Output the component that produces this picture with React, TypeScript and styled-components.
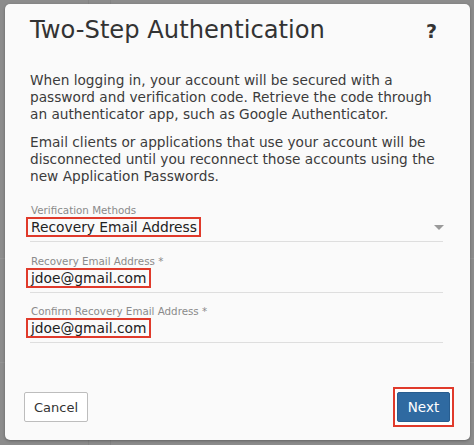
import React from "react";
import styled, { createGlobalStyle } from "styled-components";

const GlobalStyle = createGlobalStyle`
  html, body {
    margin: 0;
    padding: 0;
    background: #8c8c8c;
  }
  body {
    font-family: "DejaVu Sans", "Liberation Sans", sans-serif;
  }
`;

// the page behind the dialog shows through as a dimmed grid
const Backdrop = styled.div`
  width: 474px;
  height: 445px;
  box-sizing: border-box;
  padding: 4px 4px 5px 5px;
  background-color: #8c8c8c;
  background-image: linear-gradient(#848484, #848484),
    linear-gradient(#848484, #848484), linear-gradient(#939393, #939393),
    linear-gradient(#939393, #939393);
  background-size: 1px 100%, 1px 100%, 100% 1px, 100% 1px;
  background-position: 88px 0, 110px 0, 0 258px, 0 362px;
  background-repeat: no-repeat;
`;

const Modal = styled.div`
  height: 100%;
  box-sizing: border-box;
  background: #fafafa;
  border-radius: 5px;
  box-shadow: 0 1px 3px rgba(0, 0, 0, 0.3);
  padding: 11px 27px 13px 25px;
  display: flex;
  flex-direction: column;
`;

const Header = styled.div`
  display: flex;
  align-items: center;
  justify-content: space-between;
  margin-bottom: 27px;
`;

const Title = styled.h1`
  margin: 0;
  font-size: 24.2px;
  font-weight: 400;
  color: #333;
  line-height: 30px;
`;

const HelpMark = styled.span`
  font-size: 19px;
  line-height: 20px;
  font-weight: 700;
  color: #333;
  margin-right: 6px;
  margin-top: 2px;
`;

const Paragraph = styled.p`
  margin: 0 0 11px;
  font-size: 13.7px;
  line-height: 17px;
  color: #3c3c3c;
`;

const Field = styled.div<{ $first?: boolean }>`
  display: flex;
  flex-direction: column;
  border-bottom: 1px solid #dedede;
  padding-bottom: 4px;
  margin-top: ${({ $first }) => ($first ? "8px" : "0")};
  margin-bottom: 12.5px;
`;

const FieldLabel = styled.label`
  font-size: 10.3px;
  color: #8a8a8a;
  line-height: 13px;
  padding-left: 1px;
`;

const ValueRow = styled.div`
  display: flex;
  align-items: center;
  justify-content: space-between;
`;

const Value = styled.span<{ $highlight?: boolean }>`
  font-size: 13.8px;
  line-height: 16px;
  color: #222;
  padding: 0 2px 0 3px;
  margin-left: -4px;
  border: 2px solid
    ${({ $highlight }) => ($highlight ? "#e03a2b" : "transparent")};
`;

const Caret = styled.span`
  width: 0;
  height: 0;
  border-left: 5px solid transparent;
  border-right: 5px solid transparent;
  border-top: 5px solid #9a9a9a;
  margin-right: -1px;
`;

const Spacer = styled.div`
  flex: 1;
`;

const Footer = styled.div`
  display: flex;
  align-items: center;
  justify-content: space-between;
  margin-left: -6px;
  margin-right: -11px;
`;

const CancelButton = styled.button`
  height: 30px;
  width: 64px;
  padding: 0;
  background: #fff;
  border: 1px solid #bdbdbd;
  border-radius: 2px;
  font-family: inherit;
  font-size: 13px;
  color: #333;
`;

const Outline = styled.div`
  border: 2px solid #e03a2b;
  padding: 3px 2px;
  background: #fff;
`;

const NextButton = styled.button`
  display: block;
  height: 30px;
  width: 53px;
  padding: 0;
  background: #2f6aa1;
  border: 1px solid #285d8f;
  border-radius: 2px;
  font-family: inherit;
  font-size: 13.5px;
  color: #fff;
`;

const fields = [
  { label: "Recovery Email Address *", value: "jdoe@gmail.com" },
  { label: "Confirm Recovery Email Address *", value: "jdoe@gmail.com" },
];

export default function App() {
  return (
    <>
      <GlobalStyle />
      <Backdrop>
        <Modal>
          <Header>
            <Title>Two-Step Authentication</Title>
            <HelpMark>?</HelpMark>
          </Header>
          <Paragraph>
            When logging in, your account will be secured with a password and
            verification code. Retrieve the code through an authenticator app,
            such as Google Authenticator.
          </Paragraph>
          <Paragraph>
            Email clients or applications that use your account will be
            disconnected until you reconnect those accounts using the new
            Application Passwords.
          </Paragraph>
          <Field $first>
            <FieldLabel>Verification Methods</FieldLabel>
            <ValueRow>
              <Value $highlight>Recovery Email Address</Value>
              <Caret />
            </ValueRow>
          </Field>
          {fields.map((f) => (
            <Field key={f.label}>
              <FieldLabel>{f.label}</FieldLabel>
              <ValueRow>
                <Value $highlight>{f.value}</Value>
              </ValueRow>
            </Field>
          ))}
          <Spacer />
          <Footer>
            <CancelButton>Cancel</CancelButton>
            <Outline>
              <NextButton>Next</NextButton>
            </Outline>
          </Footer>
        </Modal>
      </Backdrop>
    </>
  );
}
